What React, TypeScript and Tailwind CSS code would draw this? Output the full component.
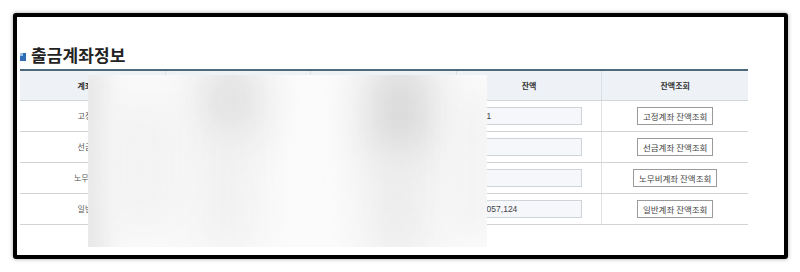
import React from "react";

const rows = [
  { name: "고정계좌", val: "12,1", btn: "고정계좌 잔액조회" },
  { name: "선금계좌", val: "", btn: "선금계좌 잔액조회" },
  { name: "노무비계좌", val: "", btn: "노무비계좌 잔액조회" },
  { name: "일반계좌", val: "12,057,124", btn: "일반계좌 잔액조회" },
];

const font = { fontFamily: '"Noto Sans CJK KR", "Noto Sans", sans-serif' };

export default function App() {
  return (
    <div className="w-[800px] h-[272px] bg-white pt-[13px] pl-[13px]" style={font}>
      <div className="relative w-[775px] h-[246px] border-4 border-black rounded-[3px] bg-white shadow-[0_0_4px_rgba(0,0,0,0.35)] overflow-hidden">
        <div className="pl-[3px] pt-[25px]">
          {/* title */}
          <div className="h-[24px] flex items-center gap-[5px]">
            <span className="relative w-[6px] h-[8px] bg-[#2f6db5] mt-[5px]">
              <span className="absolute left-0 top-0 w-[3px] h-[3px] bg-[#9cc1e8]" />
            </span>
            <span className="text-[17px] font-bold text-[#222] leading-none tracking-[0.1px]">
              출금계좌정보
            </span>
          </div>
          {/* table */}
          <div className="mt-[3px] w-[728px] border-t-2 border-[#4d6a7c]">
            <div className="grid grid-cols-5 h-[30px] bg-[#eef2f6] border-b border-[#cfd6dc] text-[8px] font-bold text-[#333]">
              <div className="flex items-center justify-center border-r border-[#d9e0e6]">계좌구분</div>
              <div className="flex items-center justify-center border-r border-[#d9e0e6]">은행명</div>
              <div className="flex items-center justify-center border-r border-[#d9e0e6]">계좌번호</div>
              <div className="flex items-center justify-center border-r border-[#d9e0e6]">잔액</div>
              <div className="flex items-center justify-center">잔액조회</div>
            </div>
            {rows.map((r) => (
              <div
                key={r.name}
                className="grid grid-cols-5 h-[31px] border-b border-[#d3d3d3] text-[8px] text-[#555]"
              >
                <div className="flex items-center justify-center border-r border-[#e2e2e2]">{r.name}</div>
                <div className="border-r border-[#e2e2e2]" />
                <div className="border-r border-[#e2e2e2]" />
                <div className="flex items-center pl-[13px] pr-[19px] border-r border-[#e2e2e2]">
                  <div
                    className="w-full h-[18px] bg-[#f5f7fa] border border-[#cfd4da] flex items-center pl-[4px] text-[8.5px] text-[#444]"
                    style={{ fontFamily: '"Liberation Sans", "Noto Sans CJK KR", sans-serif' }}
                  >
                    {r.val}
                  </div>
                </div>
                <div className="flex items-center justify-center">
                  <div className="h-[18px] px-[5px] border border-[#9a9a9a] bg-white flex items-center text-[8.5px] text-[#444] whitespace-nowrap">
                    {r.btn}
                  </div>
                </div>
              </div>
            ))}
          </div>
        </div>
        {/* blurred privacy overlay */}
        <div className="absolute left-[71px] top-[58px] w-[399px] h-[172px] bg-[#fbfbfb] overflow-hidden">
          <div className="absolute left-[-14px] top-[-10px] w-[30px] h-[200px] bg-[#e4e4e4] blur-md" />
          <div className="absolute left-[118px] top-[-20px] w-[50px] h-[90px] rounded-full bg-[#d9d9d9] blur-xl" />
          <div className="absolute left-[120px] top-[60px] w-[40px] h-[120px] rounded-full bg-[#ececec] blur-xl" />
          <div className="absolute left-[282px] top-[-20px] w-[60px] h-[110px] rounded-full bg-[#d4d4d4] blur-xl" />
          <div className="absolute left-[285px] top-[80px] w-[50px] h-[110px] rounded-full bg-[#e8e8e8] blur-xl" />
          <div className="absolute left-[20px] top-[20px] w-[70px] h-[140px] rounded-full bg-[#f1f1f1] blur-xl" />
          <div className="absolute left-[370px] top-[20px] w-[30px] h-[140px] bg-[#f0f0f0] blur-lg" />
        </div>
      </div>
    </div>
  );
}
